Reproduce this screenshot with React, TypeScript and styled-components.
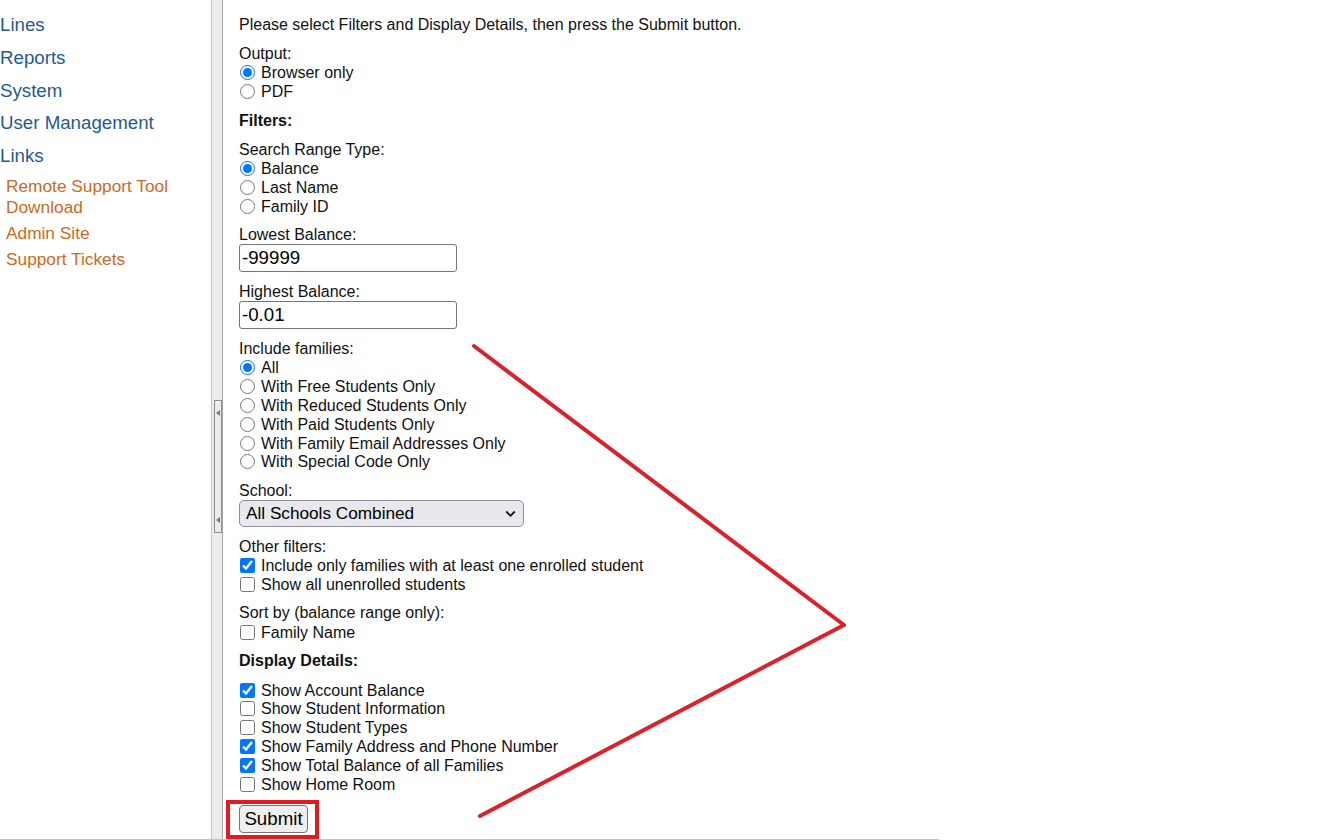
import React from "react";
import styled, { createGlobalStyle } from "styled-components";

const Global = createGlobalStyle`
  html, body { margin: 0; padding: 0; background: #fff; }
  body { font-family: "Liberation Sans", Arial, sans-serif; color: #000; }
`;

const Page = styled.div`
  position: relative;
  width: 1339px;
  height: 840px;
  overflow: hidden;
`;

const Frame = styled.div`
  display: flex;
  width: 939px;
  height: 839px;
  border-bottom: 1px solid #c4c4c4;
  overflow: hidden;
`;

const Sidebar = styled.nav`
  width: 211px;
  flex: none;
  padding-top: 9px;
  box-sizing: border-box;
`;

const NavLink = styled.a`
  display: block;
  font-size: 18.7px;
  line-height: 32.75px;
  color: #1f5a93;
  text-decoration: none;
`;

const ExtLinks = styled.div`
  margin-top: 3px;
  padding-left: 6px;
`;

const ExtLink = styled.a`
  display: block;
  font-size: 17.3px;
  line-height: 21px;
  color: #cc6a1f;
  text-decoration: none;
  & + & { margin-top: 5px; }
`;

const Splitter = styled.div`
  width: 12px;
  flex: none;
  box-sizing: border-box;
  background: #ececec;
  border-left: 1px solid #c8c8c8;
  border-right: 1px solid #a6a6a6;
  padding-top: 400px;
`;

const Handle = styled.div`
  margin-left: 2px;
  width: 8px;
  height: 133px;
  box-sizing: border-box;
  border: 1px solid #8c8c8c;
  display: flex;
  flex-direction: column;
  justify-content: space-between;
  padding: 9px 0 9px 1px;
`;

const Arrow = styled.div`
  width: 0;
  height: 0;
  border-top: 3px solid transparent;
  border-bottom: 3px solid transparent;
  border-right: 4px solid #7a7a7a;
`;

const Content = styled.main`
  flex: 1;
  padding: 15px 0 0 16px;
  font-size: 16px;
  color: #111;
`;

const Group = styled.div`
  margin-bottom: 10px;
`;

const Line = styled.div<{ $bold?: boolean }>`
  line-height: 19px;
  font-weight: ${(p) => (p.$bold ? "bold" : "normal")};
`;

const Option = styled.label`
  display: flex;
  align-items: center;
  box-sizing: border-box;
  height: 18.8px;
  padding-top: 1px;
  line-height: 19px;
  white-space: nowrap;
`;

const Radio = styled.input.attrs({ type: "radio" })`
  width: 15px;
  height: 15px;
  margin: 0 6px 0 1px;
  accent-color: #0075ff;
`;

const Check = styled.input.attrs({ type: "checkbox" })`
  width: 15px;
  height: 15px;
  margin: 0 6px 0 1px;
  accent-color: #0075ff;
`;

const TextInput = styled.input`
  display: block;
  width: 218px;
  height: 28px;
  box-sizing: border-box;
  border: 1px solid #767676;
  border-radius: 3px;
  padding: 0 2px;
  font-family: "Liberation Sans", Arial, sans-serif;
  font-size: 18.7px;
  color: #000;
  background: #fff;
`;

const SelectWrap = styled.div`
  position: relative;
  width: 285px;
  height: 27px;
`;

const Select = styled.select`
  appearance: none;
  width: 285px;
  height: 27px;
  box-sizing: border-box;
  border: 1px solid #8f8f9d;
  border-radius: 5px;
  background: #e9e9ed;
  padding: 0 0 0 6px;
  font-family: "Liberation Sans", Arial, sans-serif;
  font-size: 17.2px;
  color: #000;
`;

const Chevron = styled.svg`
  position: absolute;
  right: 8px;
  top: 10px;
  pointer-events: none;
`;

const SubmitButton = styled.button`
  margin-top: 2px;
  width: 69px;
  height: 28px;
  box-sizing: border-box;
  border: 1px solid #767676;
  border-radius: 4px;
  background: #efefef;
  font-family: "Liberation Sans", Arial, sans-serif;
  font-size: 18.7px;
  color: #000;
  padding: 0;
`;

const Annotation = styled.svg`
  position: absolute;
  left: 0;
  top: 0;
  pointer-events: none;
`;

const radio = (name: string, label: string, checked = false) => (
  <Option key={label}>
    <Radio name={name} defaultChecked={checked} />
    {label}
  </Option>
);

const check = (label: string, checked = false) => (
  <Option key={label}>
    <Check defaultChecked={checked} />
    {label}
  </Option>
);

export default function App() {
  return (
    <Page>
      <Global />
      <Frame>
        <Sidebar>
          <NavLink>Lines</NavLink>
          <NavLink>Reports</NavLink>
          <NavLink>System</NavLink>
          <NavLink>User Management</NavLink>
          <NavLink>Links</NavLink>
          <ExtLinks>
            <ExtLink>Remote Support Tool Download</ExtLink>
            <ExtLink>Admin Site</ExtLink>
            <ExtLink>Support Tickets</ExtLink>
          </ExtLinks>
        </Sidebar>
        <Splitter>
          <Handle>
            <Arrow />
            <Arrow />
          </Handle>
        </Splitter>
        <Content>
          <Group>
            <Line>Please select Filters and Display Details, then press the Submit button.</Line>
          </Group>
          <Group>
            <Line>Output:</Line>
            {radio("output", "Browser only", true)}
            {radio("output", "PDF")}
          </Group>
          <Group>
            <Line $bold>Filters:</Line>
          </Group>
          <Group>
            <Line>Search Range Type:</Line>
            {radio("range", "Balance", true)}
            {radio("range", "Last Name")}
            {radio("range", "Family ID")}
          </Group>
          <Group>
            <Line>Lowest Balance:</Line>
            <TextInput defaultValue="-99999" />
          </Group>
          <Group>
            <Line>Highest Balance:</Line>
            <TextInput defaultValue="-0.01" />
          </Group>
          <Group>
            <Line>Include families:</Line>
            {radio("fam", "All", true)}
            {radio("fam", "With Free Students Only")}
            {radio("fam", "With Reduced Students Only")}
            {radio("fam", "With Paid Students Only")}
            {radio("fam", "With Family Email Addresses Only")}
            {radio("fam", "With Special Code Only")}
          </Group>
          <Group>
            <Line>School:</Line>
            <SelectWrap>
              <Select defaultValue="all">
                <option value="all">All Schools Combined</option>
              </Select>
              <Chevron width="11" height="8" viewBox="0 0 11 8">
                <path d="M1.2 1.5 L5.5 5.8 L9.8 1.5" fill="none" stroke="#111" strokeWidth="1.8" />
              </Chevron>
            </SelectWrap>
          </Group>
          <Group>
            <Line>Other filters:</Line>
            {check("Include only families with at least one enrolled student", true)}
            {check("Show all unenrolled students")}
          </Group>
          <Group>
            <Line>Sort by (balance range only):</Line>
            {check("Family Name")}
          </Group>
          <Group>
            <Line $bold>Display Details:</Line>
          </Group>
          <Group>
            {check("Show Account Balance", true)}
            {check("Show Student Information")}
            {check("Show Student Types")}
            {check("Show Family Address and Phone Number", true)}
            {check("Show Total Balance of all Families", true)}
            {check("Show Home Room")}
          </Group>
          <SubmitButton>Submit</SubmitButton>
        </Content>
      </Frame>
      <Annotation width="1339" height="840" viewBox="0 0 1339 840">
        <polyline
          points="474,346 844,625 480,816"
          fill="none"
          stroke="#d8232a"
          strokeWidth="4"
          strokeLinecap="round"
          strokeLinejoin="round"
        />
        <rect x="228" y="802" width="89" height="35" fill="none" stroke="#e01b24" strokeWidth="4" />
      </Annotation>
    </Page>
  );
}
